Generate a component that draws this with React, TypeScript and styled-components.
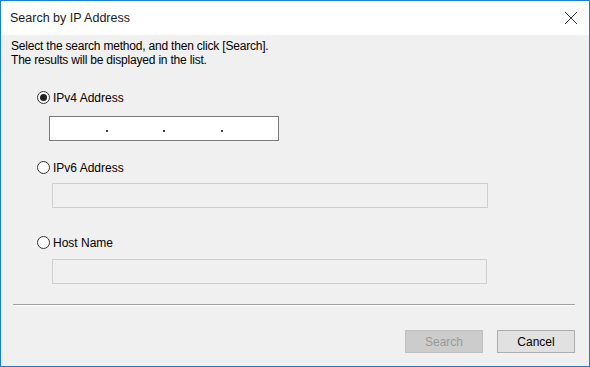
import styled, { createGlobalStyle } from "styled-components"

const Global = createGlobalStyle`
    html, body { margin: 0; padding: 0; background: #fff; }
    * { box-sizing: border-box; }
`

const Window = styled.div`
    width: 590px;
    height: 367px;
    border: 1px solid #1a7fd4;
    background: #f0f0f0;
    display: flex;
    flex-direction: column;
    font-family: "Liberation Sans", Arial, sans-serif;
    font-size: 12px;
    color: #000;
`
const TitleBar = styled.div`
    height: 34px;
    background: #fff;
    display: flex;
    align-items: center;
    justify-content: space-between;
    padding: 0 10px 0 9px;
    font-size: 12.5px;
    color: #1a1a1a;
`
const CloseBtn = styled.div`
    width: 14px;
    height: 14px;
    margin-right: 1px;
    display: flex;
`
const Body = styled.div`
    flex: 1;
    display: flex;
    flex-direction: column;
    padding: 4px 14px 0 10px;
`
const Intro = styled.p`
    margin: 0;
    line-height: 14px;
    letter-spacing: -0.2px;
`
const OptionRow = styled.label<{ $top: number }>`
    display: flex;
    align-items: center;
    gap: 3px;
    margin: ${p => p.$top}px 0 0 26px;
    height: 15px;
`
const Radio = styled.span<{ $checked?: boolean }>`
    width: 13px;
    height: 13px;
    border-radius: 50%;
    border: 1px solid #333;
    background: #fff;
    display: flex;
    align-items: center;
    justify-content: center;
    &::after {
        content: "";
        width: 7px;
        height: 7px;
        border-radius: 50%;
        background: ${p => (p.$checked ? "#222" : "transparent")};
    }
`
const Field = styled.div<{ $top: number; $left: number; $width: number; $disabled?: boolean }>`
    margin: ${p => p.$top}px 0 0 ${p => p.$left}px;
    width: ${p => p.$width}px;
    height: 25px;
    border: 1px solid ${p => (p.$disabled ? "#cfcfcf" : "#7a7a7a")};
    background: ${p => (p.$disabled ? "#f0f0f0" : "#fff")};
    display: flex;
    align-items: center;
`
const Octet = styled.span`
    flex: 1;
`
const Dot = styled.span`
    width: 2px;
    height: 2px;
    margin-top: 4px;
    background: #444;
`
const Separator = styled.hr`
    margin: 20px 0 0 2px;
    border: none;
    border-top: 1px solid #a0a0a0;
    border-bottom: 1px solid #fff;
`
const Buttons = styled.div`
    display: flex;
    justify-content: flex-end;
    gap: 14px;
    margin-top: 24px;
`
const Button = styled.button<{ $disabled?: boolean }>`
    width: 78px;
    height: 23px;
    padding: 0;
    font-family: inherit;
    font-size: 12px;
    border: 1px solid ${p => (p.$disabled ? "#bfbfbf" : "#adadad")};
    background: ${p => (p.$disabled ? "#cccccc" : "#e1e1e1")};
    color: ${p => (p.$disabled ? "#9a9a9a" : "#000")};
`

export default function App() {
    return (
        <>
            <Global />
            <Window>
                <TitleBar>
                    <span>Search by IP Address</span>
                    <CloseBtn>
                        <svg width="14" height="14" viewBox="0 0 14 14">
                            <path d="M1 1L13 13M13 1L1 13" stroke="#333" strokeWidth="1" fill="none" />
                        </svg>
                    </CloseBtn>
                </TitleBar>
                <Body>
                    <Intro>
                        Select the search method, and then click [Search].<br />
                        The results will be displayed in the list.
                    </Intro>
                    <OptionRow $top={23}>
                        <Radio $checked />
                        IPv4 Address
                    </OptionRow>
                    <Field $top={11} $left={38} $width={230}>
                        <Octet /><Dot /><Octet /><Dot /><Octet /><Dot /><Octet />
                    </Field>
                    <OptionRow $top={19}>
                        <Radio />
                        IPv6 Address
                    </OptionRow>
                    <Field $top={8} $left={41} $width={436} $disabled />
                    <OptionRow $top={27}>
                        <Radio />
                        Host Name
                    </OptionRow>
                    <Field $top={9} $left={41} $width={435} $disabled />
                    <Separator />
                    <Buttons>
                        <Button $disabled>Search</Button>
                        <Button>Cancel</Button>
                    </Buttons>
                </Body>
            </Window>
        </>
    )
}
